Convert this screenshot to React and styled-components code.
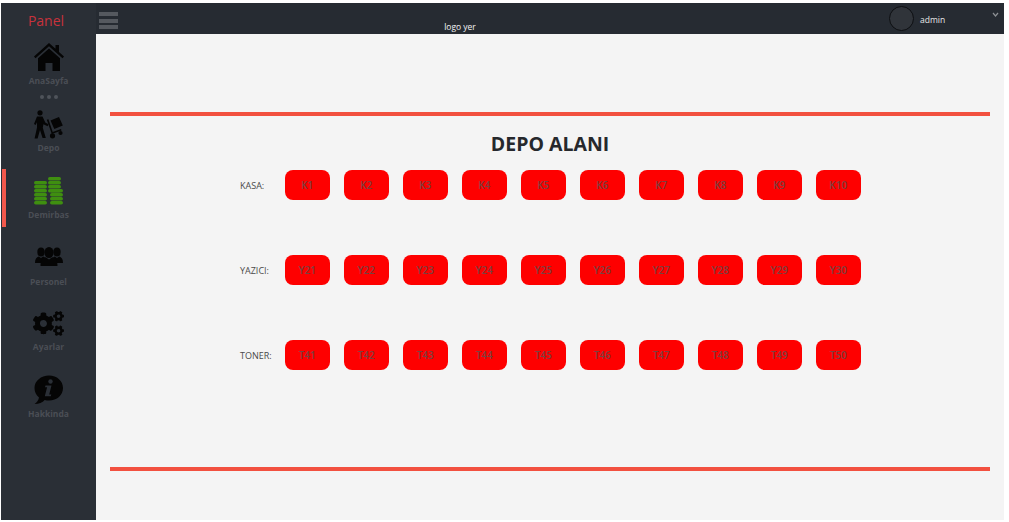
import React from "react";
import styled, { createGlobalStyle } from "styled-components";
import { FaCogs } from "react-icons/fa";

const GlobalStyle = createGlobalStyle`
  html, body {
    margin: 0;
    padding: 0;
    background: #ffffff;
    overflow: hidden;
  }
  * { box-sizing: border-box; }
`;

/* ================= LAYOUT ================= */

const Page = styled.div`
  width: 1009px;
  height: 522px;
  padding: 3px 5px 2px 1px;
`;

const Frame = styled.div`
  display: flex;
  height: 100%;
  font-family: "Open Sans", "Liberation Sans", sans-serif;
`;

/* ================= SIDEBAR ================= */

const Sidebar = styled.aside`
  width: 95px;
  flex-shrink: 0;
  display: flex;
  flex-direction: column;
  background: #2a2f36;
`;

const Brand = styled.div`
  height: 39px;
  padding-top: 8px;
  padding-right: 5px;
  text-align: center;
  font-size: 14px;
  line-height: 20px;
  color: #c8323c;
`;

const NavItem = styled.div`
  position: relative;
  height: ${(p) => p.$height}px;
  padding-top: ${(p) => p.$top || 0}px;
  display: flex;
  flex-direction: column;
  align-items: center;
`;

const IconSlot = styled.div`
  height: 30px;
  display: flex;
  align-items: center;
  justify-content: center;
  color: #050505;
`;

const NavLabel = styled.span`
  margin-top: ${(p) => p.$gap}px;
  font-size: 8.5px;
  line-height: 13px;
  font-weight: 700;
  color: #4a4e55;
`;

const ActiveBar = styled.span`
  position: absolute;
  left: 1px;
  top: 0;
  width: 4px;
  height: 58px;
  background: #f2584c;
`;

const Dots = styled.div`
  display: flex;
  justify-content: center;
  gap: 3px;
  height: 17px;
  padding-top: 3px;
`;

const Dot = styled.i`
  width: 4px;
  height: 4px;
  border-radius: 50%;
  background: #4f535a;
`;

/* ================= MAIN ================= */

const Main = styled.div`
  flex: 1;
  display: flex;
  flex-direction: column;
  min-width: 0;
`;

const Topbar = styled.header`
  height: 31px;
  flex-shrink: 0;
  display: flex;
  align-items: flex-start;
  background: #262b32;
  color: #fff;
`;

const Burger = styled.div`
  width: 19px;
  flex-shrink: 0;
  margin: 9px 0 0 3px;
  display: flex;
  flex-direction: column;
  gap: 2.5px;
`;

const BurgerLine = styled.span`
  height: 4px;
  background: #55595f;
`;

const LogoText = styled.div`
  width: 80px;
  flex-shrink: 0;
  margin: 17px 0 0 302px;
  text-align: center;
  font-size: 8.5px;
  line-height: 13px;
  color: #f2f2f2;
`;

const UserBox = styled.div`
  margin-left: 389px;
  width: 115px;
  flex-shrink: 0;
  display: flex;
  align-items: flex-start;
`;

const Avatar = styled.div`
  width: 25px;
  height: 25px;
  flex-shrink: 0;
  margin-top: 3px;
  border-radius: 50%;
  border: 1px solid #0d0f12;
  background: #30343a;
`;

const UserName = styled.span`
  margin: 10px 0 0 6px;
  font-size: 8.5px;
  line-height: 13px;
  color: #e6e6e6;
`;

const Caret = styled.svg`
  margin: 9px 0 0 47px;
  flex-shrink: 0;
`;

const Content = styled.main`
  flex: 1;
  padding: 78px 14px 0 14px;
  background: #f4f4f4;
`;

const RedLine = styled.hr`
  height: 4px;
  margin: 0;
  border: 0;
  background: #f2503f;
`;

const Title = styled.h1`
  margin: 15px 0 13px;
  text-align: center;
  font-size: 19.5px;
  line-height: 26px;
  font-weight: 700;
  color: #26282c;
`;

const Rows = styled.div`
  display: flex;
  flex-direction: column;
  gap: 55px;
  padding-left: 130px;
`;

const Row = styled.div`
  display: flex;
  align-items: center;
`;

const RowLabel = styled.span`
  width: 45px;
  font-size: 9px;
  color: #4a4a4a;
`;

const Slots = styled.div`
  display: flex;
  gap: 14.5px;
`;

const Slot = styled.button`
  width: 44.5px;
  height: 30px;
  padding: 0;
  border: 0;
  border-radius: 8px;
  background: #fe0000;
  font-family: inherit;
  font-size: 10px;
  font-weight: 600;
  color: #7c3f3f;
`;

const BottomLine = styled(RedLine)`
  margin-top: 97px;
`;

/* ================= ICONS ================= */

const HomeIcon = () => (
  <svg width="30" height="28" viewBox="0 0 30 28" fill="#050505">
    <path d="M15 0L0 13.500l1.500 1.700L15 3.200l13.500 12 1.500-1.700-5-4.500V2h-3.500v3.800z" />
    <path d="M15 5.500L4 15.300V28h7.500v-8h7v8H26V15.300z" />
  </svg>
);

const DollyIcon = () => (
  <svg width="30" height="29" viewBox="0 0 30 29" fill="#050505">
    <circle cx="6" cy="2.800" r="2.600" />
    <path d="M3 6.500h5.500l2.800 6 3.200 1.800-.9 1.900-4.200-1.900-.6 3.500 3 10.200H8.600L6 20l-2.400 8.500H.6l2.400-11v-5.200L1.600 15 0 14z" />
    <path d="M16.500 10.500l8.500-3.500 3.800 8.500-8.500 3.500z" />
    <path d="M12.800 9.800l5 14.200 9.700-3.500-.5-1.500-8.300 3-4.300-12.700z" />
    <circle cx="18.500" cy="25.800" r="2.600" />
    <circle cx="26.500" cy="23" r="2.100" />
  </svg>
);

const CoinStack = ({ x, y, rows }) => (
  <g>
    {Array.from({ length: rows }).map((_, i) => (
      <rect key={i} x={x} y={y + i * 4} width="13" height="3.400" rx="1.700" fill="#3f8f10" />
    ))}
  </g>
);

const CoinsIcon = () => (
  <svg width="31" height="28" viewBox="0 0 31 28">
    <CoinStack x={1} y={4} rows={6} />
    <CoinStack x={15} y={0} rows={4} />
    <CoinStack x={17} y={12} rows={4} />
  </svg>
);

const UsersIcon = () => (
  <svg width="28" height="19" viewBox="0 0 28 19" fill="#050505">
    <ellipse cx="6" cy="5" rx="3.700" ry="4.500" />
    <path d="M0 16c0-4 1.500-6 3.800-6.500L6 11l2.200-1.500L10 10.500 6.500 16z" />
    <ellipse cx="22" cy="5" rx="3.700" ry="4.500" />
    <path d="M28 16c0-4-1.500-6-3.800-6.500L22 11l-2.200-1.500L18 10.500l3.500 5.500z" />
    <ellipse cx="14" cy="5.500" rx="4.500" ry="5.500" />
    <path d="M5.500 19c0-5.500 2-8 5.200-8.700L14 12.500l3.300-2.200C20.500 11 22.500 13.500 22.500 19z" />
  </svg>
);

const InfoIcon = () => (
  <svg width="31" height="30" viewBox="0 0 31 30">
    <path
      fill="#050505"
      d="M16 .5C24 .5 30 6 30 13s-6 12.500-14 12.500c-1.500 0-3-.2-4.300-.6C9.500 27.500 6 29 1.500 29c2.300-1.500 4-3.600 4.500-6.600C3 20 1.500 16.800 1.500 13 1.500 6 8 .5 16 .5z"
    />
    <circle cx="17.500" cy="6.500" r="2.200" fill="#2a2f36" />
    <path fill="#2a2f36" d="M12.500 10.500h6l-2.300 9h2.100l-.5 1.800h-6l2.300-9h-2.100z" />
  </svg>
);

/* ================= DATA ================= */

const rows = [
  { label: "KASA:", slots: ["K1", "K2", "K3", "K4", "K5", "K6", "K7", "K8", "K9", "K10"] },
  { label: "YAZICI:", slots: ["Y21", "Y22", "Y23", "Y24", "Y25", "Y26", "Y27", "Y28", "Y29", "Y30"] },
  { label: "TONER:", slots: ["T41", "T42", "T43", "T44", "T45", "T46", "T47", "T48", "T49", "T50"] },
];

/* ================= COMPONENT ================= */

export default function App() {
  return (
    <Page>
      <GlobalStyle />
      <Frame>
        <Sidebar>
          <Brand>Panel</Brand>
          <NavItem $height={50}>
            <IconSlot>
              <HomeIcon />
            </IconSlot>
            <NavLabel $gap={2}>AnaSayfa</NavLabel>
          </NavItem>
          <Dots>
            <Dot />
            <Dot />
            <Dot />
          </Dots>
          <NavItem $height={60}>
            <IconSlot>
              <DollyIcon />
            </IconSlot>
            <NavLabel $gap={2}>Depo</NavLabel>
          </NavItem>
          <NavItem $height={72} $top={7}>
            <ActiveBar />
            <IconSlot>
              <CoinsIcon />
            </IconSlot>
            <NavLabel $gap={2}>Demirbas</NavLabel>
          </NavItem>
          <NavItem $height={67}>
            <IconSlot>
              <UsersIcon />
            </IconSlot>
            <NavLabel $gap={4}>Personel</NavLabel>
          </NavItem>
          <NavItem $height={67}>
            <IconSlot>
              <FaCogs size={31} />
            </IconSlot>
            <NavLabel $gap={2}>Ayarlar</NavLabel>
          </NavItem>
          <NavItem $height={60}>
            <IconSlot>
              <InfoIcon />
            </IconSlot>
            <NavLabel $gap={2}>Hakkinda</NavLabel>
          </NavItem>
        </Sidebar>

        <Main>
          <Topbar>
            <Burger>
              <BurgerLine />
              <BurgerLine />
              <BurgerLine />
            </Burger>
            <LogoText>logo yer</LogoText>
            <UserBox>
              <Avatar />
              <UserName>admin</UserName>
              <Caret width="7" height="6" viewBox="0 0 7 6">
                <path d="M1 1l2.500 3L6 1" fill="none" stroke="#8d9094" strokeWidth="1.200" />
              </Caret>
            </UserBox>
          </Topbar>

          <Content>
            <RedLine />
            <Title>DEPO ALANI</Title>
            <Rows>
              {rows.map((row) => (
                <Row key={row.label}>
                  <RowLabel>{row.label}</RowLabel>
                  <Slots>
                    {row.slots.map((slot) => (
                      <Slot key={slot}>{slot}</Slot>
                    ))}
                  </Slots>
                </Row>
              ))}
            </Rows>
            <BottomLine />
          </Content>
        </Main>
      </Frame>
    </Page>
  );
}
